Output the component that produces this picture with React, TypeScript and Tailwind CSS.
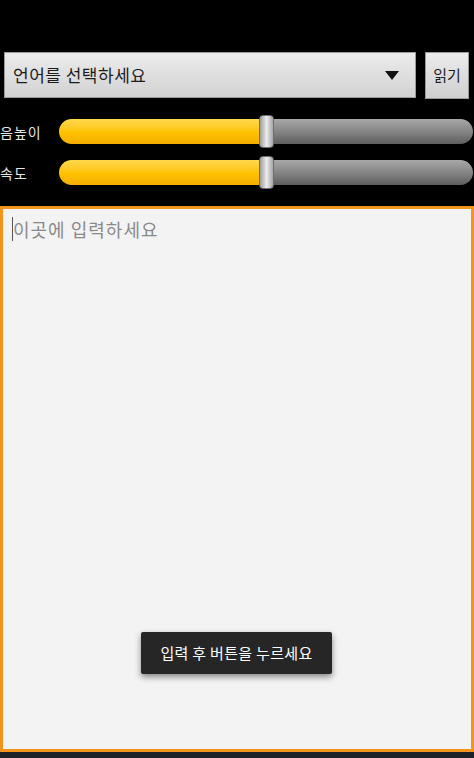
import React from 'react';

const font = { fontFamily: '"Noto Sans CJK KR", "Noto Sans", sans-serif' };

const Slider: React.FC<{ label: string }> = ({ label }) => (
  <div className="flex items-center h-[41px]">
    <div className="w-[59px] text-[14px] tracking-[1px] text-[#e6e6e6] leading-none">{label}</div>
    <div className="relative w-[414px] h-[25px]">
      <div className="flex h-full rounded-full overflow-hidden">
        <div className="w-[204px] h-full bg-gradient-to-b from-[#ffd84a] via-[#ffc400] to-[#f5ae00]" />
        <div className="flex-1 h-full bg-gradient-to-b from-[#a8a8a8] via-[#858585] to-[#5e5e5e]" />
      </div>
      <div className="absolute left-[200px] top-[-4px] w-[15px] h-[33px] rounded-[4px] bg-gradient-to-r from-[#9c9c9c] via-[#ececec] to-[#a6a6a6] border border-[#6f6f6f]" />
    </div>
  </div>
);

export default function App() {
  return (
    <div className="w-[474px] h-[758px] bg-black flex flex-col overflow-hidden" style={font}>
      <div className="flex items-start pt-[52px] pl-[4px] gap-[9px]">
        <div className="w-[412px] h-[46px] flex items-center justify-between pl-[8px] pr-[16px] bg-gradient-to-b from-[#ececec] to-[#d2d2d2] border border-[#9a9a9a]">
          <span className="text-[17px] tracking-[0.5px] text-[#1b1b1b]">언어를 선택하세요</span>
          <svg width="14" height="9" viewBox="0 0 14 9">
            <path d="M0 0 H14 L7 9 Z" fill="#111" />
          </svg>
        </div>
        <div className="w-[44px] h-[47px] flex items-center justify-center bg-gradient-to-b from-[#ececec] to-[#cfcfcf] border border-[#9a9a9a]">
          <span className="text-[15px] text-[#1b1b1b]">읽기</span>
        </div>
      </div>

      <div className="mt-[12px]">
        <Slider label="음높이" />
        <Slider label="속도" />
      </div>

      <div className="relative mt-[13px] h-[546px] bg-[#f3f3f3] border-[3px] border-[#f3941f]">
        <div className="flex items-center pt-[8px] pl-[9px]">
          <div className="w-[1px] h-[24px] bg-[#555]" />
          <span className="text-[18px] tracking-[1px] text-[#8a8a8a] leading-[24px]">이곳에 입력하세요</span>
        </div>
        <div className="absolute left-[138px] top-[423px] w-[191px] h-[42px] flex items-center justify-center bg-[#262626] rounded-[2px] shadow-[0_3px_6px_rgba(0,0,0,0.45)]">
          <span className="text-[15px] tracking-[0.3px] text-white">입력 후 버튼을 누르세요</span>
        </div>
      </div>
      <div className="flex-1 bg-[#1c2228]" />
    </div>
  );
}
